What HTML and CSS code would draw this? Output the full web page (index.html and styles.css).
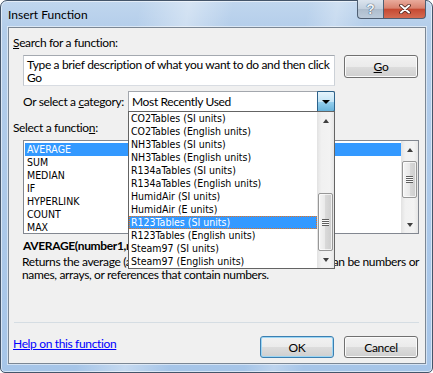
FILE: index.html
```html
<!DOCTYPE html>
<html lang="en">
<head>
	<meta charset="UTF-8">
	<title>Insert Function</title>
	<link rel="stylesheet" href="styles.css">
</head>
<body>
	<div class="window">
		<div class="titlebar">
			<span class="title">Insert Function</span>
			<div class="caption-btns">
				<span class="cap-btn help">?</span>
				<span class="cap-btn close">
					<svg width="12" height="10" viewBox="0 0 12 10">
						<path d="M2 1.5 L10 8.5 M10 1.5 L2 8.5" stroke="#4a2018" stroke-width="3.6" stroke-linecap="round" fill="none"/>
						<path d="M2 1.5 L10 8.5 M10 1.5 L2 8.5" stroke="#fff" stroke-width="2" stroke-linecap="round" fill="none"/>
					</svg>
				</span>
			</div>
		</div>

		<div class="client">
			<div class="label search-label"><u>S</u>earch for a function:</div>
			<div class="search-row">
				<div class="textbox">Type a brief description of what you want to do and then click Go</div>
				<button class="btn go"><u>G</u>o</button>
			</div>

			<div class="category-row">
				<span class="cat-label">Or select a <u>c</u>ategory:</span>
				<div class="combo">
					<span class="combo-text">Most Recently Used</span>
					<span class="combo-arrow"></span>
					<!-- open dropdown lies over the dialog -->
					<div class="droplist">
						<ul class="items drop-items">
							<li>CO2Tables (SI units)</li>
							<li>CO2Tables (English units)</li>
							<li>NH3Tables (SI units)</li>
							<li>NH3Tables (English units)</li>
							<li>R134aTables (SI units)</li>
							<li>R134aTables (English units)</li>
							<li>HumidAir (SI units)</li>
							<li>HumidAir (E units)</li>
							<li class="selected focused">R123Tables (SI units)</li>
							<li>R123Tables (English units)</li>
							<li>Steam97 (SI units)</li>
							<li>Steam97 (English units)</li>
						</ul>
						<div class="vscroll">
							<span class="sb-btn up"></span>
							<span class="thumb drop-thumb"></span>
							<span class="sb-btn down"></span>
						</div>
					</div>
				</div>
			</div>

			<div class="label select-label">Select a functio<u>n</u>:</div>
			<div class="funclist">
				<ul class="items func-items">
					<li class="selected">AVERAGE</li>
					<li>SUM</li>
					<li>MEDIAN</li>
					<li>IF</li>
					<li>HYPERLINK</li>
					<li>COUNT</li>
					<li>MAX</li>
				</ul>
				<div class="vscroll">
					<span class="sb-btn up"></span>
					<span class="thumb func-thumb"></span>
					<span class="sb-btn down"></span>
				</div>
			</div>

			<div class="signature">AVERAGE(number1,number2,...)</div>
			<div class="description">Returns the average (arithmetic mean) of its arguments, which can be numbers or<br>names, arrays, or references that contain numbers.</div>

			<div class="separator"></div>
			<div class="bottom-row">
				<a href="javascript:;" class="help-link">Help on this function</a>
				<button class="btn default">OK</button>
				<button class="btn cancel">Cancel</button>
			</div>
		</div>
	</div>
</body>
</html>
```

FILE: styles.css
```css
* {
	box-sizing: border-box;
}
body {
	margin: 0;
	background: #fff;
	font-family: Lato, "Liberation Sans", sans-serif;
	font-size: 12px;
	color: #000;
}
u {
	text-decoration: underline;
	text-underline-offset: 1px;
}

/* window frame */
.window {
	width: 433px;
	height: 373px;
	display: flex;
	flex-direction: column;
	padding: 0 6px 8px 7px;
	border: 1px solid #44556a;
	border-radius: 7px 7px 5px 5px;
	background:
		linear-gradient(100deg, rgba(255,255,255,0) 28%, rgba(255,255,255,.35) 38%, rgba(255,255,255,0) 47%, rgba(255,255,255,0) 62%, rgba(255,255,255,.25) 68%, rgba(255,255,255,0) 74%),
		linear-gradient(#c0d6ee, #b3cdea 30px, #a6c5e8);
	box-shadow: inset 0 0 0 1px rgba(255,255,255,.55);
}
.titlebar {
	height: 26px;
	display: flex;
	justify-content: space-between;
	align-items: flex-start;
}
.title {
	padding-top: 6px;
	line-height: 16px;
}
.caption-btns {
	display: flex;
	margin-top: -1px;
}
.cap-btn {
	height: 19px;
	display: flex;
	align-items: center;
	justify-content: center;
	border: 1px solid #4f5f73;
	border-top: none;
}
.help {
	width: 26px;
	border-right: none;
	border-radius: 0 0 0 4px;
	background: linear-gradient(#dbe4ee, #c3d0de 48%, #aebdcd 52%, #bccbdb);
	font-family: "Liberation Sans", sans-serif;
	font-weight: bold;
	font-size: 14px;
	color: #eef3f8;
	text-shadow: 0 0 1px #33475e, 0 0 1px #33475e;
}
.close {
	width: 43px;
	border-radius: 0 0 4px 0;
	background: linear-gradient(#e9ab9c, #d9826f 45%, #c64a33 52%, #d46b52);
}

/* dialog body */
.client {
	flex: 1;
	display: flex;
	flex-direction: column;
	padding-bottom: 5px;
	background: #f0f0f0;
	border: 1px solid #7b8794;
	box-shadow: 0 0 0 1px rgba(255,255,255,.5);
	letter-spacing: -0.35px;
}
.label {
	line-height: 15px;
	margin-left: 4px;
}
.search-label {
	margin-top: 7px;
}
.select-label {
	margin-top: 8px;
}
.search-row {
	display: flex;
	align-items: flex-start;
	margin: 5px 0 0 14px;
}
.textbox {
	width: 312px;
	height: 31px;
	padding: 2px 0 0 3px;
	line-height: 13px;
	background: #fff;
	border: 1px solid;
	border-color: #a4a9b0 #ccd1d7 #d8dce2 #c2c7cd;
}
.btn {
	width: 74px;
	height: 22px;
	padding: 0;
	font-family: Lato, "Liberation Sans", sans-serif;
	font-size: 12px;
	letter-spacing: -0.35px;
	color: #000;
	border: 1px solid #707070;
	border-radius: 3px;
	background: linear-gradient(#f2f2f2, #ebebeb 50%, #dddddd 50%, #cfcfcf);
	box-shadow: inset 0 0 0 1px #fbfbfb;
}
.btn.go {
	height: 23px;
	margin-left: 9px;
}
.btn.default {
	border-color: #3c7fb1;
	box-shadow: inset 0 0 0 1px #9cd6f4;
}
.btn.cancel {
	margin: 0 7px 0 10px;
}

.category-row {
	display: flex;
	align-items: center;
	margin-top: 5px;
}
.cat-label {
	width: 119px;
	padding-right: 4px;
	text-align: right;
}
.combo {
	position: relative;
	width: 207px;
	height: 21px;
	display: flex;
	align-items: center;
	background: #fff;
	border: 1px solid #a3a7ad;
}
.combo-text {
	flex: 1;
	padding-left: 3px;
}
.combo-arrow {
	width: 18px;
	height: 21px;
	margin: -1px -1px -1px 0;
	display: flex;
	align-items: center;
	justify-content: center;
	border: 1px solid #2c628b;
	border-radius: 0 2px 2px 0;
	background: linear-gradient(#e5f4fc, #c4e5f6 50%, #98d1ef 50%, #68b3db);
}
.combo-arrow::after {
	content: "";
	border-left: 4px solid transparent;
	border-right: 4px solid transparent;
	border-top: 4px solid #000;
}

/* lists */
.items {
	list-style: none;
	margin: 0;
	font-family: "DejaVu Sans Condensed", "DejaVu Sans", sans-serif;
	font-stretch: condensed;
	font-size: 10.5px;
	letter-spacing: 0;
}
.items li {
	height: 13px;
	line-height: 13px;
	padding-left: 2px;
	white-space: nowrap;
}
.items li.selected {
	background: #3399ff;
	color: #fff;
}
.items li.focused {
	outline: 1px dotted #e8731c;
	outline-offset: -1px;
}

.droplist {
	position: absolute;
	top: 19px;
	left: -1px;
	z-index: 2;
	width: 207px;
	height: 158px;
	display: flex;
	background: #fff;
	border: 1px solid #646464;
}
.drop-items {
	flex: 1;
	padding: 0;
}

.funclist {
	width: 396px;
	height: 94px;
	margin: 5px 0 0 14px;
	display: flex;
	background: #fff;
	border: 1px solid #828790;
}
.func-items {
	flex: 1;
	padding: 2px 0 0 1px;
}

.vscroll {
	width: 17px;
	display: flex;
	flex-direction: column;
	align-items: center;
	background: linear-gradient(to right, #e2e2e2, #f1f1f1 25%, #f3f3f3 75%, #e6e6e6);
}
.sb-btn {
	width: 17px;
	height: 17px;
	display: flex;
	align-items: center;
	justify-content: center;
}
.sb-btn.up::after {
	content: "";
	border-left: 3.5px solid transparent;
	border-right: 3.5px solid transparent;
	border-bottom: 4px solid #3f3f3f;
}
.sb-btn.down {
	margin-top: auto;
}
.sb-btn.down::after {
	content: "";
	border-left: 3.5px solid transparent;
	border-right: 3.5px solid transparent;
	border-top: 4px solid #3f3f3f;
}
.thumb {
	width: 15px;
	display: flex;
	align-items: center;
	justify-content: center;
	border: 1px solid #979797;
	border-radius: 2px;
	background: linear-gradient(to right, #f5f5f5, #e8e8e8 50%, #d9d9d9 50%, #cdcdcd);
	box-shadow: inset 0 0 0 1px rgba(255,255,255,.7);
}
.thumb::after {
	content: "";
	width: 7px;
	height: 7px;
	background: repeating-linear-gradient(#5e5e5e 0 1px, #fafafa 1px 2px);
}
.drop-thumb {
	height: 58px;
	margin-top: 64px;
}
.func-thumb {
	height: 37px;
	margin-top: 3px;
}

.signature {
	margin: 4px 0 0 14px;
	line-height: 15px;
	font-weight: 700;
}
.description {
	margin: 2px 0 0 13px;
	line-height: 13px;
	white-space: nowrap;
}

.separator {
	height: 1px;
	width: 405px;
	margin: auto 0 13px 5px;
	background: #d5dde3;
}
.bottom-row {
	height: 22px;
	display: flex;
	align-items: flex-start;
	padding-left: 4px;
}
.help-link {
	margin-right: auto;
	line-height: 15px;
	color: #0000ff;
	text-decoration: underline;
}
```
